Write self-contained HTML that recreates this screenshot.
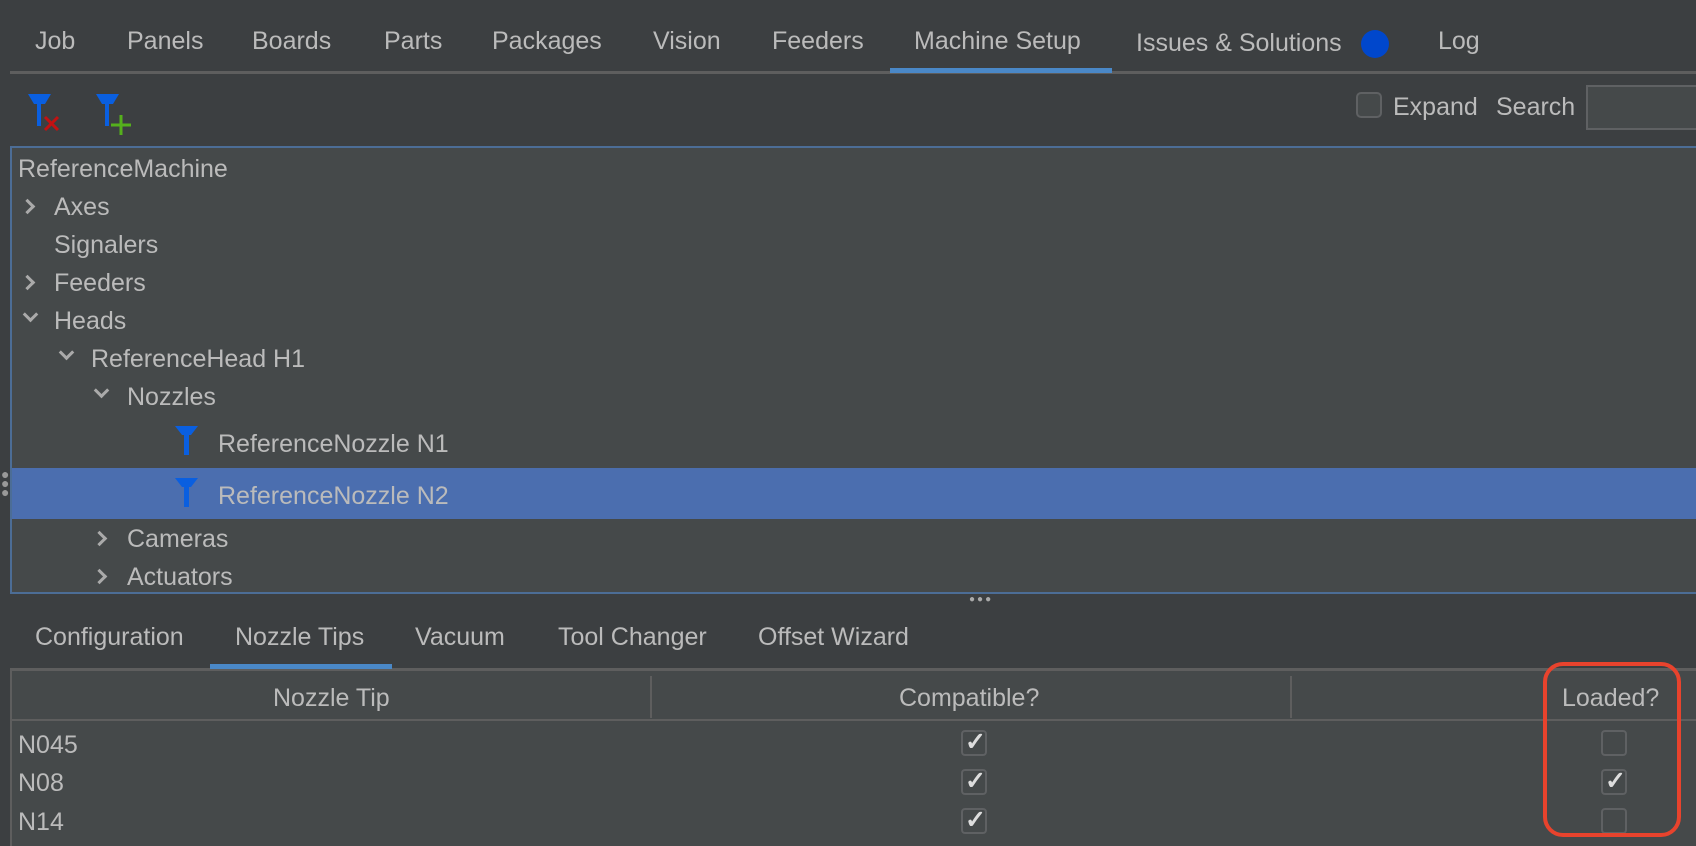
<!DOCTYPE html>
<html><head><meta charset="utf-8"><style>
*{margin:0;padding:0;box-sizing:border-box}
body{width:1696px;height:846px;background:#3c3f41;font-family:"Liberation Sans",sans-serif;color:#bbbbbb;position:relative;overflow:hidden;font-size:25px}
.a{position:absolute;white-space:nowrap}
.t{top:27px}
.chev{position:absolute;width:11px;height:11px;border-right:3px solid #aaa;border-bottom:3px solid #aaa}
.r{transform:rotate(-45deg)}
.d{transform:rotate(45deg)}
.cb{position:absolute;width:26px;height:26px;border:2px solid #5f6163;border-radius:4px;background:#45494a}
.ck{position:absolute;font-size:25px;color:#ddd;font-weight:bold}
</style></head><body>
<div class="a t" style="left:35px">Job</div>
<div class="a t" style="left:127px">Panels</div>
<div class="a t" style="left:252px">Boards</div>
<div class="a t" style="left:384px">Parts</div>
<div class="a t" style="left:492px">Packages</div>
<div class="a t" style="left:653px">Vision</div>
<div class="a t" style="left:772px">Feeders</div>
<div class="a t" style="left:914px">Machine Setup</div>
<div class="a" style="left:1136px;top:29px">Issues &amp; Solutions</div>
<div class="a" style="left:1361px;top:30px;width:28px;height:28px;border-radius:50%;background:#0047cc"></div>
<div class="a t" style="left:1438px">Log</div>
<div class="a" style="left:10px;top:71px;width:1686px;height:3px;background:#5e5e5e"></div>
<div class="a" style="left:890px;top:68px;width:222px;height:5px;background:#4a88c7"></div>

<svg class="a" style="left:26px;top:92px" width="45" height="42"><polygon points="2,2 25,2 19,12 8,12" fill="#0a5fe0"/><rect x="11" y="12" width="4" height="22" fill="#0a5fe0"/><path d="M19 25 L32 38 M32 25 L19 38" stroke="#c21212" stroke-width="3"/></svg>
<svg class="a" style="left:94px;top:92px" width="45" height="46"><polygon points="2,2 25,2 19,12 8,12" fill="#0a5fe0"/><rect x="11" y="12" width="4" height="22" fill="#0a5fe0"/><path d="M27 23 V43 M17 33 H37" stroke="#55b01c" stroke-width="3"/></svg>

<div class="cb" style="left:1356px;top:92px;border-radius:5px"></div>
<div class="a" style="left:1393px;top:93px">Expand</div>
<div class="a" style="left:1496px;top:93px">Search</div>
<div class="a" style="left:1586px;top:85px;width:120px;height:45px;border:2px solid #5f6163;background:#45494a"></div>

<div class="a" style="left:10px;top:146px;width:1690px;height:448px;border:2px solid #4c6d96;background:#45494a"></div>
<div class="a" style="left:12px;top:468px;width:1690px;height:51px;background:#4b6eaf"></div>
<div class="a" style="left:18px;top:155px">ReferenceMachine</div>
<div class="chev r" style="left:22px;top:201px"></div><div class="a" style="left:54px;top:193px">Axes</div>
<div class="a" style="left:54px;top:231px">Signalers</div>
<div class="chev r" style="left:22px;top:277px"></div><div class="a" style="left:54px;top:269px">Feeders</div>
<div class="chev d" style="left:25px;top:309px"></div><div class="a" style="left:54px;top:307px">Heads</div>
<div class="chev d" style="left:61px;top:347px"></div><div class="a" style="left:91px;top:345px">ReferenceHead H1</div>
<div class="chev d" style="left:96px;top:385px"></div><div class="a" style="left:127px;top:383px">Nozzles</div>
<svg class="a" style="left:174px;top:425px" width="26" height="32"><polygon points="1,1 24,1 17,10 8,10" fill="#0a5fe0"/><rect x="10" y="10" width="5" height="20" fill="#0a5fe0"/></svg>
<div class="a" style="left:218px;top:430px">ReferenceNozzle N1</div>
<svg class="a" style="left:174px;top:477px" width="26" height="32"><polygon points="1,1 24,1 17,10 8,10" fill="#0a5fe0"/><rect x="10" y="10" width="5" height="20" fill="#0a5fe0"/></svg>
<div class="a" style="left:218px;top:482px">ReferenceNozzle N2</div>
<div class="chev r" style="left:94px;top:533px"></div><div class="a" style="left:127px;top:525px">Cameras</div>
<div class="chev r" style="left:94px;top:571px"></div><div class="a" style="left:127px;top:563px">Actuators</div>
<div class="a" style="left:1px;top:470px;color:#999;font-size:14px;line-height:9px">●<br>●<br>●</div>
<div class="a" style="left:969px;top:594px;color:#aaa;font-size:10px;letter-spacing:2px">●●●</div>

<div class="a" style="left:35px;top:623px">Configuration</div>
<div class="a" style="left:235px;top:623px">Nozzle Tips</div>
<div class="a" style="left:415px;top:623px">Vacuum</div>
<div class="a" style="left:558px;top:623px">Tool Changer</div>
<div class="a" style="left:758px;top:623px">Offset Wizard</div>
<div class="a" style="left:10px;top:668px;width:1686px;height:3px;background:#5e5e5e"></div>
<div class="a" style="left:210px;top:664px;width:182px;height:5px;background:#4a88c7"></div>

<div class="a" style="left:10px;top:671px;width:1686px;height:175px;background:#45494a;border-left:2px solid #5e5e5e"></div>
<div class="a" style="left:12px;top:719px;width:1684px;height:2px;background:#5e5e5e"></div>
<div class="a" style="left:650px;top:676px;width:2px;height:42px;background:#5e5e5e"></div>
<div class="a" style="left:1290px;top:676px;width:2px;height:42px;background:#5e5e5e"></div>
<div class="a" style="left:273px;top:684px">Nozzle Tip</div>
<div class="a" style="left:899px;top:684px">Compatible?</div>
<div class="a" style="left:1562px;top:684px">Loaded?</div>
<div class="a" style="left:18px;top:731px">N045</div>
<div class="a" style="left:18px;top:769px">N08</div>
<div class="a" style="left:18px;top:808px">N14</div>
<div class="cb" style="left:961px;top:730px"></div><div class="ck" style="left:965px;top:727px">✓</div>
<div class="cb" style="left:961px;top:769px"></div><div class="ck" style="left:965px;top:766px">✓</div>
<div class="cb" style="left:961px;top:808px"></div><div class="ck" style="left:965px;top:805px">✓</div>
<div class="cb" style="left:1601px;top:730px"></div>
<div class="cb" style="left:1601px;top:769px"></div><div class="ck" style="left:1605px;top:766px">✓</div>
<div class="cb" style="left:1601px;top:808px"></div>
<div class="a" style="left:1543px;top:662px;width:138px;height:175px;border:4px solid #e8432d;border-radius:20px"></div>
</body></html>
